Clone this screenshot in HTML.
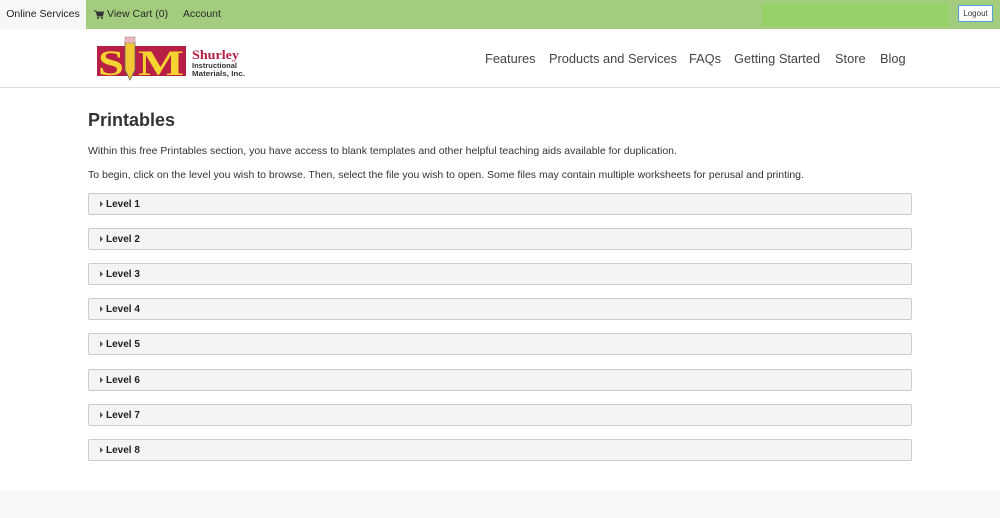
<!DOCTYPE html>
<html><head><meta charset="utf-8"><style>
*{box-sizing:border-box;margin:0;padding:0}
body{width:1000px;height:518px;overflow:hidden;font-family:"Liberation Sans",Arial,sans-serif;background:#fff;color:#333;position:relative}
.top{position:absolute;left:0;top:0;width:1000px;height:29px;background:#a3cc7f}
.top .os{position:absolute;left:0;top:0;width:86px;height:29px;background:#f7f7f7;font-size:10.5px;line-height:28px;text-align:center;color:#222}
.top .t{position:absolute;top:0;font-size:10.5px;line-height:28px;color:#2a2a2a}
.gbox{position:absolute;left:762px;top:3px;width:187px;height:24px;background:#97d16a}
.lo{position:absolute;left:958px;top:5px;width:35px;height:17px;border:1px solid #4fa3d9;background:#fff;font-size:8px;line-height:15px;text-align:center;color:#333}
.hdr{position:absolute;top:29px;left:0;width:1000px;height:59px;border-bottom:1px solid #ddd}
.nav{position:absolute;top:51px;font-size:12.8px;color:#444;white-space:nowrap}
h1{position:absolute;left:88px;top:110px;font-size:18px;font-weight:bold;color:#333}
p{position:absolute;left:88px;font-size:10.5px;color:#333}
.acc{position:absolute;left:88px;width:824px;height:22px;background:#f4f4f4;border:1px solid #ccc;border-radius:2px;font-size:10px;font-weight:bold;line-height:20px;padding-top:1px;padding-left:17px;color:#222}
.acc:before{content:"";position:absolute;left:11px;top:7px;border-left:3px solid #555;border-top:3px solid transparent;border-bottom:3px solid transparent}
.foot{position:absolute;left:0;top:490px;width:1000px;height:28px;background:#f8f8f8}
</style></head><body>
<div class="top">
<div class="os">Online Services</div>
<svg style="position:absolute;left:94px;top:10px" width="10" height="9" viewBox="0 0 10 9"><path d="M0 1h2l1.5 5h5l1-4H3" fill="#333" stroke="#333" stroke-width="1"/><circle cx="4" cy="8" r="1" fill="#333"/><circle cx="8" cy="8" r="1" fill="#333"/></svg>
<div class="t" style="left:107px">View Cart (0)</div>
<div class="t" style="left:183px">Account</div>
<div class="gbox"></div>
<div class="lo">Logout</div>
</div>
<div class="hdr">
<svg style="position:absolute;left:97px;top:7px" width="150" height="45" viewBox="0 0 150 45">
<rect x="0" y="10" width="89" height="30" fill="#b71f45"/>
<text x="1" y="39" font-family="Liberation Serif" font-weight="bold" font-size="36" fill="#f5d330" textLength="26" lengthAdjust="spacingAndGlyphs">S</text>
<polygon points="28,6 38,6 38,34 33,44 28,34" fill="#f2c933" stroke="#666" stroke-width="0.8"/>
<rect x="28" y="1" width="10" height="6" fill="#f0b8b8" stroke="#888" stroke-width="0.5"/>
<text x="41" y="39" font-family="Liberation Serif" font-weight="bold" font-size="36" fill="#f5d330" textLength="46" lengthAdjust="spacingAndGlyphs">M</text>
<text x="95" y="23" font-family="Liberation Serif" font-weight="bold" font-size="12.5" fill="#b71f45" textLength="47" lengthAdjust="spacingAndGlyphs">Shurley</text>
<text x="95" y="32" font-size="7.5" font-weight="bold" fill="#333">Instructional</text>
<text x="95" y="40" font-size="7.5" font-weight="bold" fill="#333" textLength="53" lengthAdjust="spacingAndGlyphs">Materials, Inc.</text>
</svg>
</div>
<div class="nav" style="left:485px">Features</div>
<div class="nav" style="left:549px">Products and Services</div>
<div class="nav" style="left:689px">FAQs</div>
<div class="nav" style="left:734px">Getting Started</div>
<div class="nav" style="left:835px">Store</div>
<div class="nav" style="left:880px">Blog</div>
<h1>Printables</h1>
<p style="top:145px">Within this free Printables section, you have access to blank templates and other helpful teaching aids available for duplication.</p>
<p style="top:169px">To begin, click on the level you wish to browse. Then, select the file you wish to open. Some files may contain multiple worksheets for perusal and printing.</p>
<div class="acc" style="top:193px">Level 1</div>
<div class="acc" style="top:228px">Level 2</div>
<div class="acc" style="top:263px">Level 3</div>
<div class="acc" style="top:298px">Level 4</div>
<div class="acc" style="top:333px">Level 5</div>
<div class="acc" style="top:369px">Level 6</div>
<div class="acc" style="top:404px">Level 7</div>
<div class="acc" style="top:439px">Level 8</div>
<div class="foot"></div>
</body></html>
